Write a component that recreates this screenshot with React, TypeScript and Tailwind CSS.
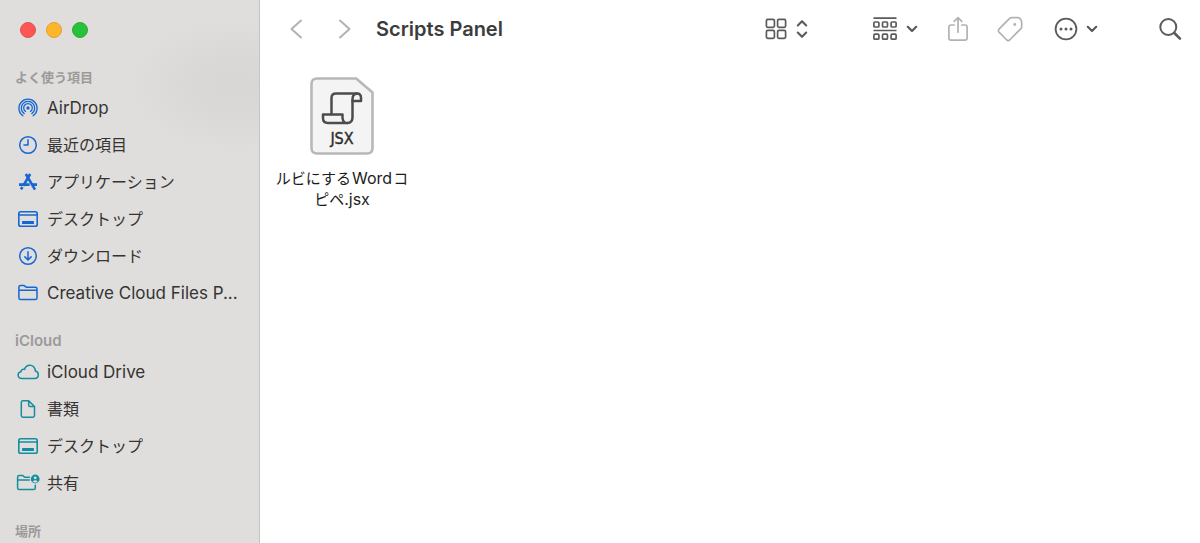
import type { ReactNode } from "react";

const line = {
  fill: "none",
  stroke: "currentColor",
  strokeWidth: 1.5,
  strokeLinecap: "round",
  strokeLinejoin: "round",
} as const;

function SideIcon({ children }: { children: ReactNode }) {
  return (
    <svg viewBox="0 0 24 22" className="h-[22px] w-6 shrink-0" aria-hidden="true" {...line}>
      {children}
    </svg>
  );
}

const AirDropIcon = () => (
  <SideIcon>
    <g strokeWidth="1.3">
      <path d="M6.9 18.8A9.1 9.1 0 1 1 17.1 18.8" />
      <path d="M8.2 16.6A6.7 6.7 0 1 1 15.8 16.6" />
      <path d="M9.5 14.4A4.3 4.3 0 1 1 14.5 14.4" />
    </g>
    <circle cx="12" cy="11" r="1.7" fill="currentColor" stroke="none" />
  </SideIcon>
);

const ClockIcon = () => (
  <SideIcon>
    <circle cx="12" cy="11" r="8.3" />
    <path d="M12 5.8V11H8" />
  </SideIcon>
);

const AppsIcon = () => (
  <SideIcon>
    <g strokeWidth="2.6" strokeLinecap="butt">
      <path d="M9.8 3 19 18.6" />
      <path d="M14.2 3 7.2 14.8" />
      <path d="M3 13.6H13.6M16.2 13.6H21" />
      <path d="M6.4 16 5 18.4" />
    </g>
  </SideIcon>
);

const DesktopIcon = () => (
  <SideIcon>
    <rect x="2.8" y="3.8" width="18.4" height="14.4" rx="1.8" strokeWidth="1.6" />
    <path d="M3 7H21" strokeWidth="1.3" />
    <rect x="6" y="13" width="12" height="3" rx="0.4" fill="currentColor" stroke="none" />
  </SideIcon>
);

const DownloadIcon = () => (
  <SideIcon>
    <circle cx="12" cy="11" r="8.3" />
    <path d="M12 6.8V14.8M8.9 11.9 12 15 15.1 11.9" />
  </SideIcon>
);

const FolderIcon = () => (
  <SideIcon>
    <path d="M2.9 16V5.2Q2.9 3.6 4.5 3.6H8.2L10.2 5.2H19.4Q21 5.2 21 6.8V16Q21 17.6 19.4 17.6H4.5Q2.9 17.6 2.9 16ZM3 8.3H21" />
  </SideIcon>
);

const CloudIcon = () => (
  <SideIcon>
    <path d="M6 17.5C3.7 17.5 2.1 16 2.1 14.1C2.1 12.3 3.3 11.1 5 10.8C4.9 9 6.7 7.7 8.5 8.4C9.3 5.9 11.2 4.3 13.8 4.3C17.1 4.3 19.4 6.8 19.3 10C21.2 10.3 22.3 11.8 22.3 13.7C22.3 15.9 20.6 17.5 18.3 17.5Z" />
  </SideIcon>
);

const DocumentIcon = () => (
  <SideIcon>
    <path d="M12.7 2.7H7Q5.3 2.7 5.3 4.4V17.6Q5.3 19.3 7 19.3H16.8Q18.5 19.3 18.5 17.6V8.5ZM12.7 2.9V7.2Q12.7 8.5 14 8.5H18.3" />
  </SideIcon>
);

const SharedIcon = () => (
  <SideIcon>
    <path d="M13.4 5.2H8.7L6.9 3.6H3.2Q1.6 3.6 1.6 5.2V16Q1.6 17.6 3.2 17.6H17.7Q19.3 17.6 19.3 16V13.2M1.8 8.1H13.4" />
    <circle cx="19.2" cy="7" r="4.4" fill="currentColor" stroke="none" />
    <circle cx="19.2" cy="5.8" r="1.4" fill="#dfdedc" stroke="none" />
    <path d="M16.7 9.7Q19.2 6.8 21.7 9.7Q19.2 11.4 16.7 9.7Z" fill="#dfdedc" stroke="none" />
  </SideIcon>
);

type Section = {
  title: string;
  titleSize: string;
  color: string;
  items: { label: string; size: string; icon: ReactNode }[];
};

// Latin labels run slightly larger than Japanese ones
const latin = "text-[17px]";
const kana = "text-[16px]";

const sections: Section[] = [
  {
    title: "よく使う項目",
    titleSize: "text-[13px]",
    color: "text-[#1767d2]",
    items: [
      { label: "AirDrop", size: latin, icon: <AirDropIcon /> },
      { label: "最近の項目", size: kana, icon: <ClockIcon /> },
      { label: "アプリケーション", size: kana, icon: <AppsIcon /> },
      { label: "デスクトップ", size: kana, icon: <DesktopIcon /> },
      { label: "ダウンロード", size: kana, icon: <DownloadIcon /> },
      { label: "Creative Cloud Files P...", size: latin, icon: <FolderIcon /> },
    ],
  },
  {
    title: "iCloud",
    titleSize: "text-[15px]",
    color: "text-[#168d9f]",
    items: [
      { label: "iCloud Drive", size: latin, icon: <CloudIcon /> },
      { label: "書類", size: kana, icon: <DocumentIcon /> },
      { label: "デスクトップ", size: kana, icon: <DesktopIcon /> },
      { label: "共有", size: kana, icon: <SharedIcon /> },
    ],
  },
  { title: "場所", titleSize: "text-[13px]", color: "text-[#168d9f]", items: [] },
];

function Sidebar() {
  return (
    <aside className="w-[260px] shrink-0 border-r border-[#c4c3c2] bg-[#dfdedc] bg-[radial-gradient(ellipse_110px_70px_at_235px_85px,#d8d7d5_20%,transparent)]">
      <div className="flex h-[60px] items-center gap-[10px] pl-5">
        <button type="button" aria-label="閉じる" className="size-4 rounded-full border border-[#e2504b] bg-[#fc5753]" />
        <button type="button" aria-label="しまう" className="size-4 rounded-full border border-[#e0a030] bg-[#fdb52b]" />
        <button type="button" aria-label="拡大" className="size-4 rounded-full border border-[#25ab35] bg-[#28c23a]" />
      </div>
      <nav className="flex flex-col gap-[18px] pt-[5px]" aria-label="サイドバー">
        {sections.map((section) => (
          <section key={section.title}>
            <h2 className={`pl-[15px] leading-6 font-semibold text-[#9b9a99] ${section.titleSize}`}>
              {section.title}
            </h2>
            <ul>
              {section.items.map((item) => (
                <li key={item.label}>
                  <a href="#" className="flex h-[37px] items-center gap-[7px] pl-4">
                    <span className={section.color}>{item.icon}</span>
                    <span className={`truncate leading-6 text-[#353433] ${item.size}`}>{item.label}</span>
                  </a>
                </li>
              ))}
            </ul>
          </section>
        ))}
      </nav>
    </aside>
  );
}

const ChevronDown = () => (
  <svg viewBox="0 0 12 8" className="h-2 w-3" aria-hidden="true" {...line} strokeWidth={2.2}>
    <path d="M1.8 1.8 6 6 10.2 1.8" />
  </svg>
);

function Toolbar() {
  return (
    <header className="flex h-[58px] items-center pr-[18px] pl-7 text-[#5b5b5b]">
      <div className="flex gap-8 text-[#b2b2b2]">
        <button type="button" aria-label="戻る">
          <svg viewBox="0 0 16 22" className="h-[22px] w-4" {...line} strokeWidth={2}>
            <path d="M13 2.5 3.5 11 13 19.5" />
          </svg>
        </button>
        <button type="button" aria-label="進む">
          <svg viewBox="0 0 16 22" className="h-[22px] w-4" {...line} strokeWidth={2}>
            <path d="M4 2.5 13.5 11 4 19.5" />
          </svg>
        </button>
      </div>
      <h1 className="ml-6 text-xl font-semibold text-[#3c3c3c]">Scripts Panel</h1>

      <div className="ml-auto flex items-center">
        <button type="button" aria-label="表示" className="flex items-center gap-[9px]">
          <svg viewBox="0 0 22 22" className="size-[22px]" {...line} strokeWidth={1.7}>
            <rect x="1.4" y="1.4" width="8" height="8" rx="1.3" />
            <rect x="12.6" y="1.4" width="8" height="8" rx="1.3" />
            <rect x="1.4" y="12.4" width="8" height="8" rx="1.3" />
            <rect x="12.6" y="12.4" width="8" height="8" rx="1.3" />
          </svg>
          <svg viewBox="0 0 12 20" className="h-5 w-3" {...line} strokeWidth={2.1}>
            <path d="M1.8 6.4 6 2.2 10.2 6.4M1.8 13.6 6 17.8 10.2 13.6" />
          </svg>
        </button>

        <button type="button" aria-label="グループ" className="ml-16 flex items-center gap-2">
          <svg viewBox="0 0 26 24" className="h-6 w-[26px]" {...line} strokeWidth={1.7}>
            <path d="M1.5 1.2H24.5M1.5 13.5H24.5" strokeLinecap="butt" />
            {[1.9, 10.5, 19.1].map((x) => (
              <g key={x}>
                <rect x={x} y="5" width="5" height="5" rx="1" />
                <rect x={x} y="17.2" width="5" height="5" rx="1" />
              </g>
            ))}
          </svg>
          <ChevronDown />
        </button>

        <button type="button" aria-label="共有" className="ml-[29px] text-[#b2b2b2]">
          <svg viewBox="0 0 22 26" className="h-[26px] w-[22px]" {...line} strokeWidth={1.7}>
            <path d="M7.2 9H4Q1.9 9 1.9 11.1V22Q1.9 24.1 4 24.1H18Q20.1 24.1 20.1 22V11.1Q20.1 9 18 9H14.8" />
            <path d="M11 16.2V1.8M7.2 5.4 11 1.6 14.8 5.4" />
          </svg>
        </button>

        <button type="button" aria-label="タグ" className="ml-7 text-[#b2b2b2]">
          <svg viewBox="0 0 26 26" className="size-[26px]" {...line} strokeWidth={1.7}>
            <path d="M2 13.2 12.4 2.7Q13.5 1.6 15 1.6H21Q22.5 1.6 23.2 2.8L24.2 4.2Q24.7 5 24.7 6.4V10.4Q24.7 11.8 23.7 12.8L12.6 24Q11.2 25.2 9.8 24L2 16.2Q.7 14.8 2 13.2Z" />
            <circle cx="17.8" cy="8.5" r="1.4" fill="currentColor" stroke="none" />
          </svg>
        </button>

        <button type="button" aria-label="アクション" className="ml-[31px] flex items-center gap-2">
          <svg viewBox="0 0 24 24" className="size-6" {...line} strokeWidth={1.8}>
            <circle cx="12" cy="12" r="10.4" />
            <g fill="currentColor" stroke="none">
              <circle cx="7" cy="12" r="1.5" />
              <circle cx="12" cy="12" r="1.5" />
              <circle cx="17" cy="12" r="1.5" />
            </g>
          </svg>
          <ChevronDown />
        </button>

        <button type="button" aria-label="検索" className="ml-[60px]">
          <svg viewBox="0 0 24 24" className="size-6" {...line} strokeWidth={2}>
            <circle cx="10.3" cy="10" r="8" />
            <path d="M16.3 16 22 21.6" strokeWidth="2.6" />
          </svg>
        </button>
      </div>
    </header>
  );
}

function FileItem() {
  return (
    <button type="button" className="flex w-[140px] flex-col items-center">
      <svg viewBox="0 0 64 78" className="h-[78px] w-16" aria-hidden="true">
        <path
          d="M7 1.5H46.2L62.5 15.5V71Q62.5 76.5 57 76.5H7Q1.5 76.5 1.5 71V7Q1.5 1.5 7 1.5Z"
          fill="#f4f4f4"
          stroke="#b8b8b8"
          strokeWidth="2.6"
          strokeLinejoin="round"
        />
        <g fill="none" stroke="#4c4c4c" strokeWidth="2.5" strokeLinejoin="round" strokeLinecap="round">
          <path d="M21.5 37V21Q21.5 16.5 26 16.5H47Q51 16.5 51 21V24H42.5" />
          <path d="M47 16.5Q42.5 17 42.5 22V40Q42.5 46 37.5 46" />
          <path d="M32.5 37.5H13V41Q13 46 18 46H37.5Q33 46 32.5 41Z" />
        </g>
        <text
          x="32"
          y="67"
          textAnchor="middle"
          className="fill-[#2e2e2e] stroke-[#2e2e2e] stroke-[0.4] font-['DejaVu_Sans_Condensed','Noto_Sans',sans-serif] text-base"
        >
          JSX
        </text>
      </svg>
      <span className="mt-[13px] text-[15px] leading-[21px] whitespace-nowrap text-[#1c1c1c]">
        ルビにする<span className="mx-px text-[16px]">Word</span>コ
        <br />
        ピペ<span className="text-[16px]">.jsx</span>
      </span>
    </button>
  );
}

export default function App() {
  return (
    <div className="flex min-h-screen bg-white font-['Inter','Noto_Sans_CJK_JP',sans-serif]">
      <Sidebar />
      <main className="min-w-0 flex-1">
        <Toolbar />
        <div className="flex flex-wrap px-3 pt-[19px]">
          <FileItem />
        </div>
      </main>
    </div>
  );
}
